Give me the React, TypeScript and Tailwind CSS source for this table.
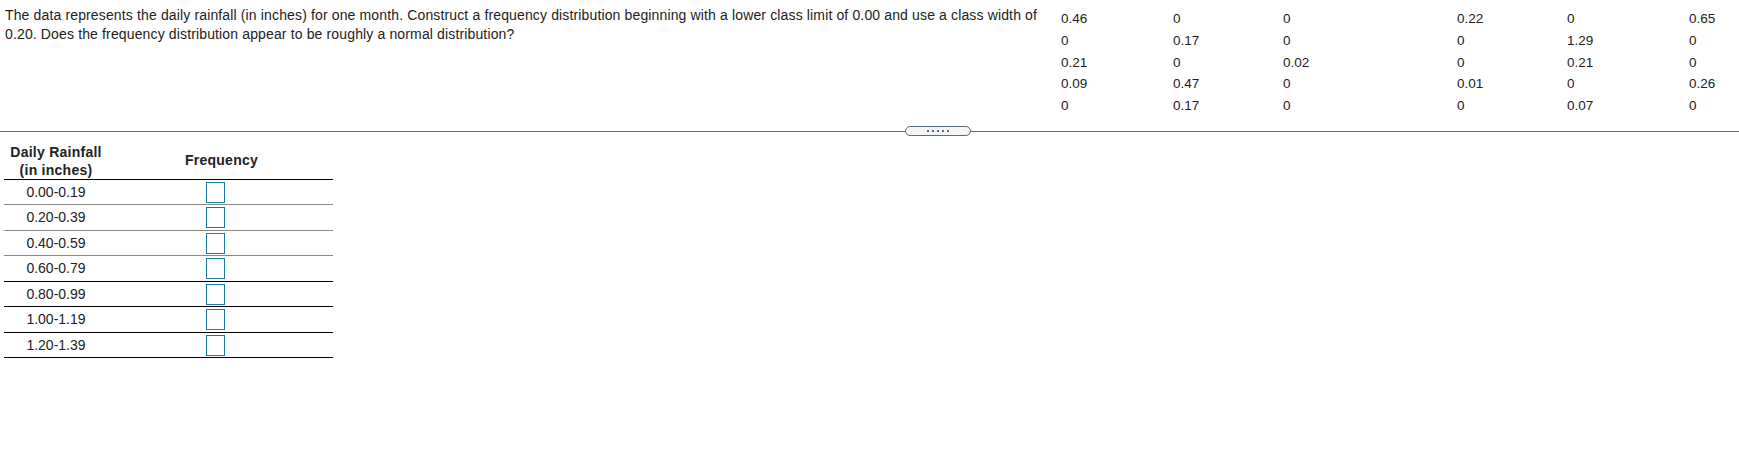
const data = [
  ['0.46', '0', '0', '0.22', '0', '0.65'],
  ['0', '0.17', '0', '0', '1.29', '0'],
  ['0.21', '0', '0.02', '0', '0.21', '0'],
  ['0.09', '0.47', '0', '0.01', '0', '0.26'],
  ['0', '0.17', '0', '0', '0.07', '0'],
];

const colWidths = ['w-[112px]', 'w-[110px]', 'w-[174px]', 'w-[110px]', 'w-[122px]', 'w-[48px]'];

const classes = [
  { label: '0.00-0.19', line: 'border-[#888]', h: 'h-[25px]' },
  { label: '0.20-0.39', line: 'border-[#888]', h: 'h-[26px]' },
  { label: '0.40-0.59', line: 'border-[#888]', h: 'h-[25px]' },
  { label: '0.60-0.79', line: 'border-black', h: 'h-[26px]' },
  { label: '0.80-0.99', line: 'border-black', h: 'h-[25px]' },
  { label: '1.00-1.19', line: 'border-black', h: 'h-[26px]' },
  { label: '1.20-1.39', line: 'border-black', h: 'h-[25px]' },
];

export default function App() {
  return (
    <div className="w-[1739px] h-[458px] bg-white text-[#222] font-['Liberation_Sans',Arial,sans-serif] overflow-hidden">
      {/* question + data */}
      <div className="flex h-[126px] pt-[6px]">
        <div className="w-[1061px] pl-[5px] pr-[19px] text-[14px] leading-[19px] tracking-[0.14px]">
          The data represents the daily rainfall (in inches) for one month. Construct a frequency distribution beginning with a lower class limit of 0.00 and use a class width of 0.20. Does the frequency distribution appear to be roughly a normal distribution?
        </div>
        <div className="pt-[2px] text-[13.5px] leading-[21.75px]">
          {data.map((row, i) => (
            <div key={i} className="flex">
              {row.map((v, j) => (
                <div key={j} className={colWidths[j]}>{v}</div>
              ))}
            </div>
          ))}
        </div>
      </div>

      {/* divider */}
      <div className="relative h-[10px]">
        <div className="absolute left-0 right-0 top-[5px] border-t border-[#5c6b7a]" />
        <div className="absolute left-[905px] top-0 w-[66px] h-[10px] rounded-full border border-[#5c6b7a] bg-[#f3f5f7] flex items-center justify-center gap-[3px]">
          {[0, 1, 2, 3, 4].map((d) => (
            <span key={d} className="w-[2px] h-[2px] bg-[#5c6b7a]" />
          ))}
        </div>
      </div>

      {/* frequency table */}
      <div className="ml-[4px] mt-[7px] w-[329px] text-[14px]">
        <div className="flex border-b border-black h-[37px] font-bold text-[14px] leading-[18px] tracking-[0.25px]">
          <div className="w-[104px] text-center">Daily Rainfall<br />(in inches)</div>
          <div className="flex-1 flex items-center justify-center pb-[2px] pl-[2px]">Frequency</div>
        </div>
        {classes.map((c) => (
          <div key={c.label} className={`flex items-center border-b ${c.line} ${c.h}`}>
            <div className="w-[104px] text-center">{c.label}</div>
            <div className="pl-[98px]">
              <div className="w-[19px] h-[21px] border border-[#1b7d9b] bg-white" />
            </div>
          </div>
        ))}
      </div>
    </div>
  );
}
